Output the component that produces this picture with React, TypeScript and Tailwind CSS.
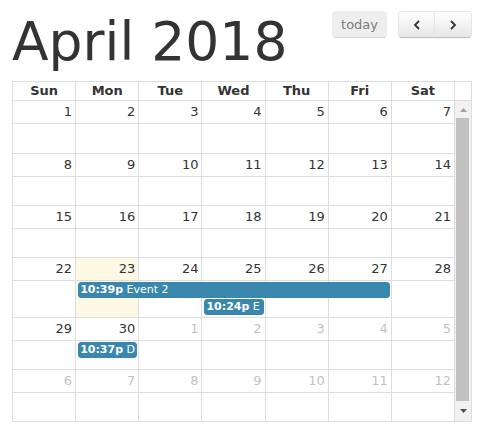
import React from "react";

type Ev = { col: string; time: string; title: string };
type Week = { days: number[]; otherFrom?: number; rows: Ev[][]; minH: string };

const weeks: Week[] = [
  { days: [1, 2, 3, 4, 5, 6, 7], rows: [], minH: "min-h-[29px]" },
  { days: [8, 9, 10, 11, 12, 13, 14], rows: [], minH: "min-h-[28px]" },
  { days: [15, 16, 17, 18, 19, 20, 21], rows: [], minH: "min-h-[28px]" },
  {
    days: [22, 23, 24, 25, 26, 27, 28],
    rows: [
      [{ col: "col-start-2 col-span-5", time: "10:39p", title: "Event 2" }],
      [{ col: "col-start-4 col-span-1", time: "10:24p", title: "E" }],
    ],
    minH: "min-h-[28px]",
  },
  {
    days: [29, 30, 1, 2, 3, 4, 5],
    otherFrom: 2,
    rows: [[{ col: "col-start-2 col-span-1", time: "10:37p", title: "D" }]],
    minH: "min-h-[28px]",
  },
  { days: [6, 7, 8, 9, 10, 11, 12], otherFrom: 0, rows: [], minH: "min-h-[28px]" },
];

const dayNames = ["Sun", "Mon", "Tue", "Wed", "Thu", "Fri", "Sat"];

function Chevron({ dir }: { dir: "left" | "right" }) {
  return (
    <svg width="8" height="10" viewBox="0 0 8 10" className="block">
      <polyline
        points={dir === "left" ? "6,1 2,5 6,9" : "2,1 6,5 2,9"}
        fill="none"
        stroke="#333"
        strokeWidth="1.8"
      />
    </svg>
  );
}

function WeekRow({ week, weekIndex }: { week: Week; weekIndex: number }) {
  const isOther = (i: number) => week.otherFrom !== undefined && i >= week.otherFrom;
  const isToday = (i: number) => weekIndex === 3 && i === 1;

  return (
    <div className="relative border-b border-[#ddd]">
      {/* background cells */}
      <div className="absolute inset-0 grid grid-cols-7">
        {week.days.map((d, i) => (
          <div
            key={i}
            className={isToday(i) ? "border-r border-[#ddd] bg-[#fcf8e3]" : "border-r border-[#ddd]"}
          />
        ))}
      </div>

      <div className="relative grid h-[23px] grid-cols-7 border-b border-[#ddd]">
        {week.days.map((d, i) => (
          <div
            key={i}
            className={
              isOther(i)
                ? "pr-[4px] pt-[2px] text-right leading-[18px] opacity-30"
                : "pr-[4px] pt-[2px] text-right leading-[18px]"
            }
          >
            {d}
          </div>
        ))}
      </div>

      <div className={`relative ${week.minH} pb-[2px]`}>
        {week.rows.map((row, r) => (
          <div key={r} className="grid grid-cols-7">
            {row.map((ev, k) => (
              <div
                key={k}
                className={`${ev.col} mx-[2px] mt-[1px] h-[16px] overflow-hidden whitespace-nowrap rounded-[3px] border border-[#3a87ad] bg-[#3a87ad] px-[1px] text-[11px] leading-[14px] text-white`}
              >
                <span className="font-bold">{ev.time}</span> {ev.title}
              </div>
            ))}
          </div>
        ))}
      </div>
    </div>
  );
}

export default function App() {
  return (
    <div className="h-[447px] w-[484px] bg-white font-['DejaVu_Sans',sans-serif] text-[13px] text-[#333]">
      <div className="ml-3 w-[460px]">
        <div className="flex h-[81px] items-start justify-between">
          <h2 className="mt-[15px] text-[53.5px] leading-none">April 2018</h2>
          <div className="mt-[11px] flex">
            <button className="h-[27px] rounded-[4px] border border-[#e6e6e6] border-b-[#bfbfbf] bg-[#e6e6e6] px-[8px] text-[13px] text-[#333] opacity-65">
              today
            </button>
            <div className="ml-[11px] flex">
              <button className="flex h-[27px] w-[37px] items-center justify-center rounded-l-[4px] border border-[#e6e6e6] border-b-[#bfbfbf] bg-linear-to-b from-white to-[#e6e6e6] shadow-[0_1px_2px_rgba(0,0,0,0.05)]">
                <Chevron dir="left" />
              </button>
              <button className="-ml-px flex h-[27px] w-[38px] items-center justify-center rounded-r-[4px] border border-[#e6e6e6] border-b-[#bfbfbf] bg-linear-to-b from-white to-[#e6e6e6] shadow-[0_1px_2px_rgba(0,0,0,0.05)]">
                <Chevron dir="right" />
              </button>
            </div>
          </div>
        </div>

        <div className="border border-[#ddd]">
          <div className="flex border-b border-[#ddd]">
            <div className="grid w-[442px] grid-cols-7">
              {dayNames.map((n) => (
                <div key={n} className="h-[18px] border-r border-[#ddd] text-center font-bold leading-[18px]">
                  {n}
                </div>
              ))}
            </div>
            <div className="w-[16px]" />
          </div>

          <div className="flex h-[320px]">
            <div className="w-[442px] overflow-hidden">
              {weeks.map((w, i) => (
                <WeekRow key={i} week={w} weekIndex={i} />
              ))}
            </div>
            <div className="flex w-[16px] flex-col bg-[#f1f1f1]">
              <div className="flex h-[17px] items-center justify-center">
                <svg width="7" height="4" viewBox="0 0 7 4">
                  <polygon points="0,4 3.5,0 7,4" fill="#a3a3a3" />
                </svg>
              </div>
              <div className="ml-[1px] h-[283px] w-[13px] bg-[#c1c1c1]" />
              <div className="flex flex-1 items-center justify-center">
                <svg width="7" height="4" viewBox="0 0 7 4">
                  <polygon points="0,0 3.5,4 7,0" fill="#505050" />
                </svg>
              </div>
            </div>
          </div>
        </div>
      </div>
    </div>
  );
}
